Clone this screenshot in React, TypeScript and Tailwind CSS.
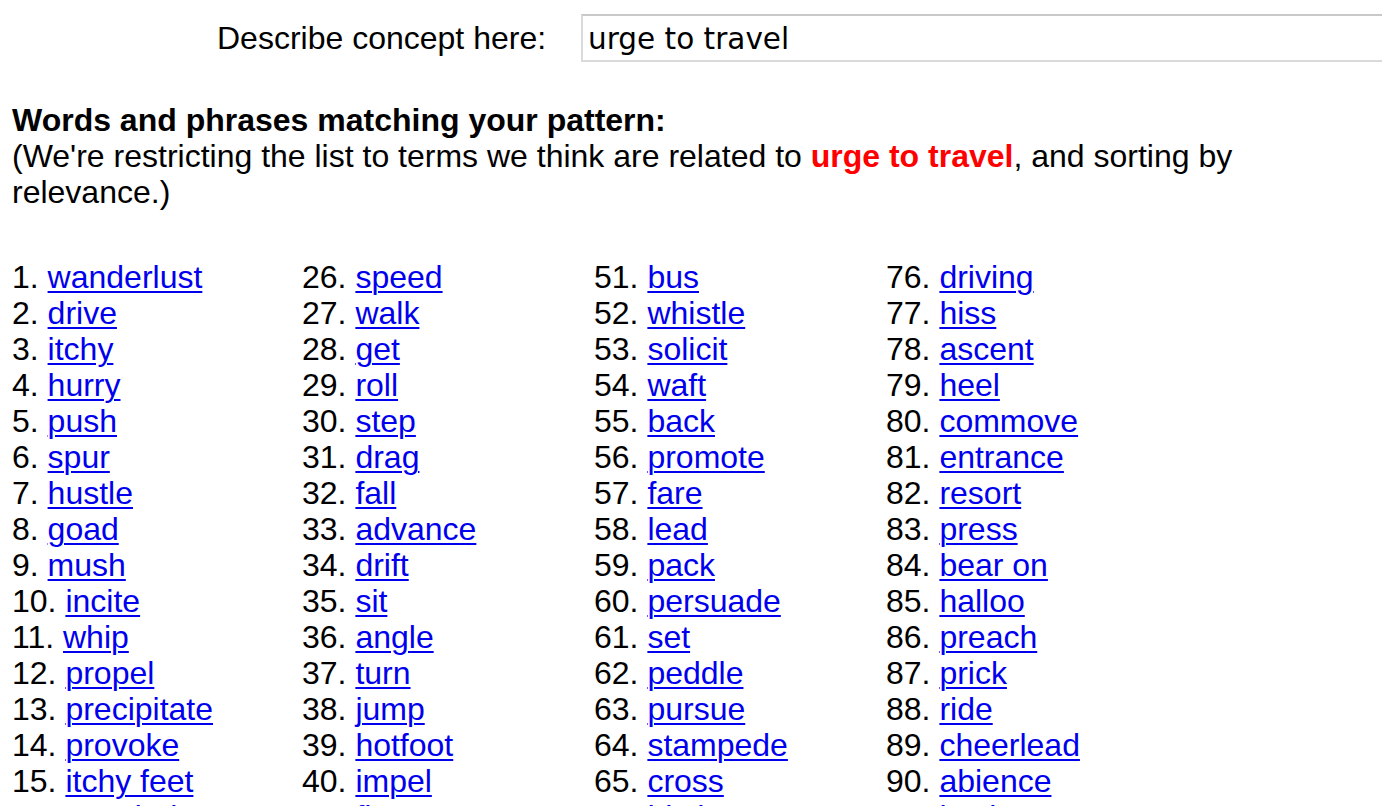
const columns: string[][] = [
  ['wanderlust', 'drive', 'itchy', 'hurry', 'push', 'spur', 'hustle', 'goad', 'mush', 'incite', 'whip', 'propel', 'precipitate', 'provoke', 'itchy feet', 'wandering'],
  ['speed', 'walk', 'get', 'roll', 'step', 'drag', 'fall', 'advance', 'drift', 'sit', 'angle', 'turn', 'jump', 'hotfoot', 'impel', 'float'],
  ['bus', 'whistle', 'solicit', 'waft', 'back', 'promote', 'fare', 'lead', 'pack', 'persuade', 'set', 'peddle', 'pursue', 'stampede', 'cross', 'hitch'],
  ['driving', 'hiss', 'ascent', 'heel', 'commove', 'entrance', 'resort', 'press', 'bear on', 'halloo', 'preach', 'prick', 'ride', 'cheerlead', 'abience', 'instinct'],
]

export default function App() {
  return (
    <div className="w-[1382px] h-[806px] overflow-hidden bg-white text-black font-['Liberation_Sans',Arial,sans-serif] text-[32px] leading-[36px]">
      {/* Concept form */}
      <div className="flex items-center pt-[14px] pl-[217px] gap-[35px]">
        <label className="whitespace-nowrap">Describe concept here:</label>
        <div className="w-[840px] shrink-0 h-[48px] flex items-center border-2 border-[#dadada] border-t-[#c8c8c8] pl-[5px] pt-[2px] bg-white">
          <span className="font-['DejaVu_Sans',Verdana,sans-serif] text-[29.5px] leading-[36px] whitespace-nowrap">urge to travel</span>
        </div>
      </div>

      {/* Intro */}
      <div className="px-3 mt-[40px]">
        <h2 className="font-bold">Words and phrases matching your pattern:</h2>
        <p className="w-[1250px]">
          (We're restricting the list to terms we think are related to{' '}
          <span className="font-bold text-[#ff0000]">urge to travel</span>, and sorting by relevance.)
        </p>
      </div>

      {/* Results */}
      <div className="grid grid-cols-[290px_292px_292px_1fr] px-3 mt-[49px]">
        {columns.map((col, ci) => (
          <div key={ci} className="flex flex-col">
            {col.map((word, i) => (
              <div key={word} className="whitespace-nowrap">
                {ci * 25 + i + 1}.{' '}
                <a href="#" className="text-[#0000ee] underline decoration-2 underline-offset-[3px]">
                  {word}
                </a>
              </div>
            ))}
          </div>
        ))}
      </div>
    </div>
  )
}
